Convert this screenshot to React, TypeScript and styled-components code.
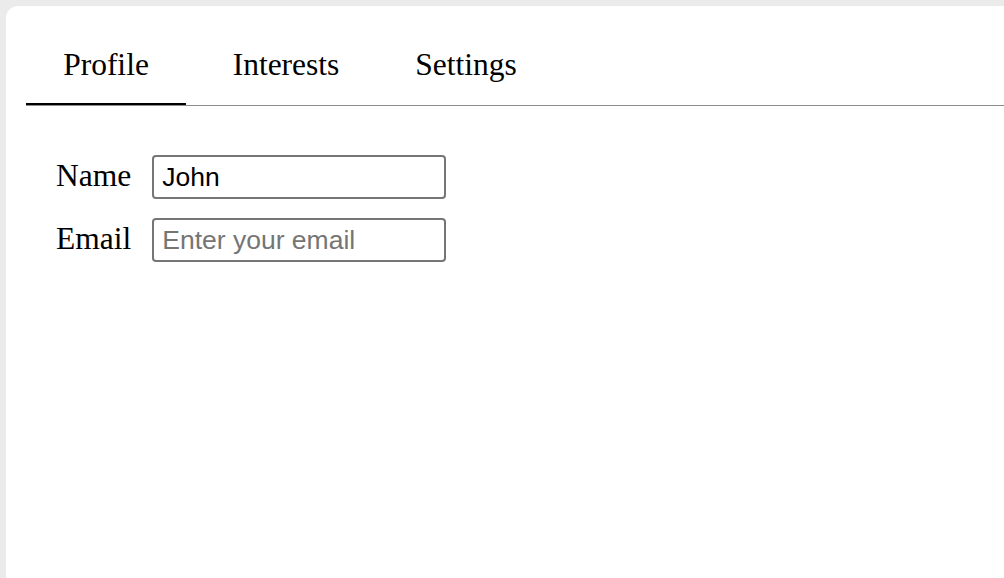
import React, { useState } from "react";
import styled, { createGlobalStyle } from "styled-components";

const GlobalStyle = createGlobalStyle`
  html, body {
    margin: 0;
    padding: 0;
    background: #ebebeb;
    overflow: hidden;
  }
  body {
    font-family: "Liberation Serif", "Times New Roman", serif;
  }
`;

const Page = styled.div`
  padding: 6px 0 0 6px;
  height: 578px;
  box-sizing: border-box;
`;

const Card = styled.div`
  background: #ffffff;
  border-radius: 12px 12px 0 0;
  margin-right: -20px;
  height: 100%;
  padding: 20px 0 0 20px;
  box-sizing: border-box;
`;

const TabList = styled.div`
  display: flex;
  gap: 20px;
  border-bottom: 1px solid #8c8c8c;
`;

const Tab = styled.button<{ $active: boolean }>`
  width: 160px;
  padding: 21px 0 20px;
  margin: 0;
  background: none;
  border: none;
  border-bottom: 2px solid ${(p) => (p.$active ? "#000000" : "transparent")};
  font-family: "Liberation Serif", "Times New Roman", serif;
  font-size: 31.5px;
  line-height: normal;
  color: #000000;
  text-align: center;
  cursor: pointer;
`;

const Form = styled.div`
  display: grid;
  grid-template-columns: auto 294px;
  column-gap: 21px;
  row-gap: 19px;
  align-items: baseline;
  justify-content: start;
  padding: 49px 0 0 30px;
`;

const Label = styled.label`
  font-family: "Liberation Serif", "Times New Roman", serif;
  font-size: 31.5px;
  line-height: normal;
  color: #000000;
`;

const Input = styled.input`
  box-sizing: border-box;
  width: 294px;
  height: 44px;
  margin: 0;
  padding: 0 8px;
  border: 2px solid #767676;
  border-radius: 4px;
  font-family: "Liberation Sans", Arial, sans-serif;
  font-size: 26.5px;
  color: #000000;
  background: #ffffff;
  outline: none;
  &::placeholder {
    color: #757575;
  }
`;

const tabs = ["Profile", "Interests", "Settings"];

export default function App() {
  const [active, setActive] = useState("Profile");
  const [name, setName] = useState("John");
  const [email, setEmail] = useState("");
  return (
    <>
      <GlobalStyle />
      <Page>
        <Card>
          <TabList>
            {tabs.map((t) => (
              <Tab key={t} $active={active === t} onClick={() => setActive(t)}>
                {t}
              </Tab>
            ))}
          </TabList>
          {active === "Profile" && (
            <Form>
              <Label htmlFor="name">Name</Label>
              <Input id="name" value={name} onChange={(e) => setName(e.target.value)} />
              <Label htmlFor="email">Email</Label>
              <Input
                id="email"
                placeholder="Enter your email"
                value={email}
                onChange={(e) => setEmail(e.target.value)}
              />
            </Form>
          )}
        </Card>
      </Page>
    </>
  );
}
